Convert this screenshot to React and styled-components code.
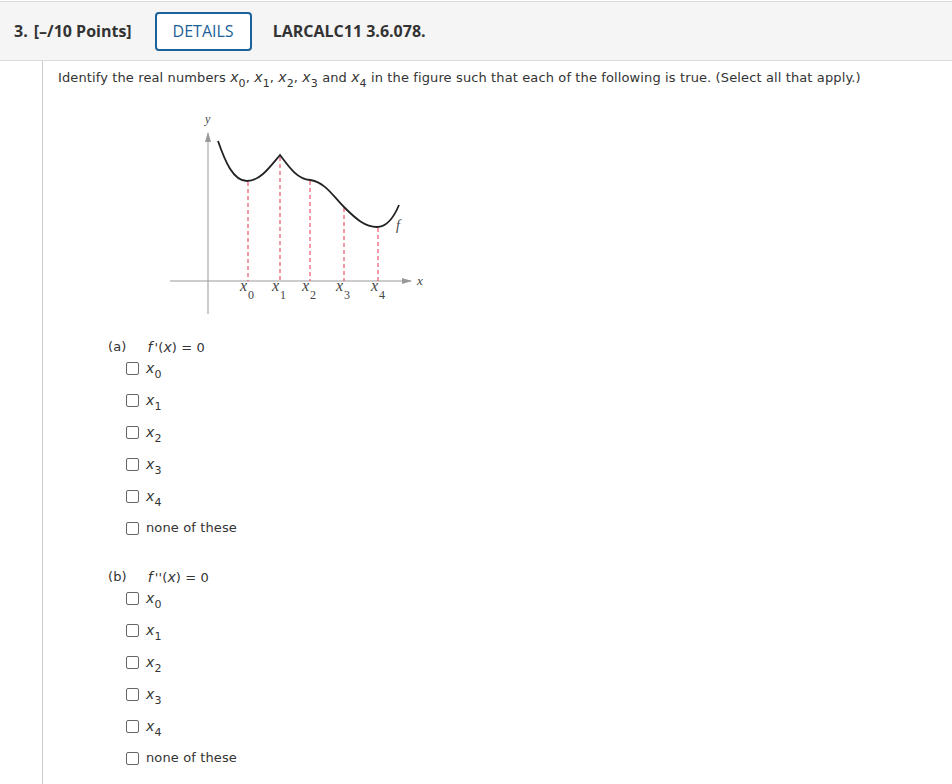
import React from "react";
import styled, { createGlobalStyle } from "styled-components";

const Global = createGlobalStyle`
  html, body { margin: 0; padding: 0; background: #fff; }
  body { font-family: "DejaVu Sans", Verdana, sans-serif; color: #333; }
`;

const Page = styled.div`
  padding-top: 1px;
  min-height: 783px;
  display: flex;
  flex-direction: column;
`;

const Header = styled.div`
  height: 58px;
  background: #f5f5f5;
  border-top: 1px solid #dcdcdc;
  border-bottom: 1px solid #dcdcdc;
  display: flex;
  align-items: center;
  padding-left: 14px;
  font-family: "Open Sans", sans-serif;
  font-weight: 700;
  font-size: 16px;
  color: #333;
`;

const Num = styled.span`
  margin-right: 6px;
`;

const DetailsBtn = styled.div`
  margin-left: 23px;
  box-sizing: border-box;
  width: 97px;
  height: 39px;
  border: 2px solid #1c6197;
  border-radius: 4px;
  background: #fff;
  color: #1c6197;
  font-weight: 400;
  font-size: 16px;
  display: flex;
  align-items: center;
  justify-content: center;
`;

const Code = styled.span`
  margin-left: 21px;
`;

const Body = styled.div`
  flex: 1;
  margin-left: 42px;
  border-left: 1px solid #cccccc;
  padding-left: 15px;
  padding-top: 6px;
  font-size: 13px;
  letter-spacing: 0.12px;
  color: #333;
`;

const Prompt = styled.p`
  margin: 0;
  line-height: 20px;
`;

const Var = styled.i`
  font-style: italic;
  font-size: 14px;
`;

const FVar = styled(Var)`
  padding-right: 2px;
`;

const Sub = styled.sub`
  font-size: 11px;
  font-style: normal;
  vertical-align: -5px;
  line-height: 0;
`;

const Figure = styled.div`
  margin-left: 107px;
  margin-top: 18px;
  width: 265px;
  height: 213px;
`;

const Part = styled.div`
  margin-left: 50px;
  margin-top: ${(p) => p.$top}px;
`;

const PartHead = styled.div`
  display: flex;
  gap: 21px;
  line-height: 20px;
`;

const Options = styled.div`
  margin-left: 18px;
  display: flex;
  flex-direction: column;
  gap: 12px;
`;

const Option = styled.label`
  display: flex;
  align-items: center;
  gap: 7px;
  height: 20px;
  line-height: 20px;
`;

const Box = styled.span`
  box-sizing: border-box;
  width: 13px;
  height: 13px;
  border: 1px solid #666;
  border-radius: 2px;
  background: #fff;
  flex: none;
`;

const Graph = () => (
  <svg width="265" height="213" viewBox="0 0 265 213">
    <defs>
      <marker id="arr" markerWidth="10" markerHeight="6" refX="9" refY="3" orient="auto">
        <path d="M0,0 L10,3 L0,6 Z" fill="#999" />
      </marker>
    </defs>
    <line x1="43" y1="208" x2="43" y2="27" stroke="#999" strokeWidth="1" markerEnd="url(#arr)" />
    <line x1="5" y1="175" x2="246" y2="175" stroke="#999" strokeWidth="1" markerEnd="url(#arr)" />
    <g stroke="#ee5670" strokeWidth="1.2" strokeDasharray="4 3">
      <line x1="83" y1="76" x2="83" y2="175" />
      <line x1="115" y1="51" x2="115" y2="175" />
      <line x1="145" y1="75" x2="145" y2="175" />
      <line x1="179" y1="102" x2="179" y2="175" />
      <line x1="213" y1="122" x2="213" y2="175" />
    </g>
    <path
      d="M53,35 C60,55 68,75 82,75 C95,75 104,62 115,49 C124,61 132,73 145,74 C160,76 168,90 179,101 C191,113 200,121 212,121 C222,121 229,111 234,99"
      fill="none"
      stroke="#222"
      strokeWidth="1.8"
    />
    <g fontFamily="Liberation Serif, serif" fill="#444">
      <text x="40" y="17" fontStyle="italic" fontSize="12">y</text>
      <text x="252" y="179" fontStyle="italic" fontSize="13">x</text>
      <text x="231" y="124" fontStyle="italic" fontSize="14">f</text>
      {[75, 107, 137, 171, 206].map((x, i) => (
        <g key={i}>
          <text x={x} y="185" fontStyle="italic" fontSize="16">x</text>
          <text x={x + 8} y="193" fontSize="12">{i}</text>
        </g>
      ))}
    </g>
  </svg>
);

const X = ({ n }) => (
  <span>
    <Var>x</Var>
    <Sub>{n}</Sub>
  </span>
);

const opts = [0, 1, 2, 3, 4];

const Question = ({ label, expr, top }) => (
  <Part $top={top}>
    <PartHead>
      <span>({label})</span>
      <span>{expr}</span>
    </PartHead>
    <Options>
      {opts.map((n) => (
        <Option key={n}>
          <Box />
          <X n={n} />
        </Option>
      ))}
      <Option>
        <Box />
        <span>none of these</span>
      </Option>
    </Options>
  </Part>
);

export default function App() {
  return (
    <>
      <Global />
      <Page>
        <Header>
          <Num>3.</Num>
          <span>[–/10 Points]</span>
          <DetailsBtn>DETAILS</DetailsBtn>
          <Code>LARCALC11 3.6.078.</Code>
        </Header>
        <Body>
          <Prompt>
            Identify the real numbers <X n={0} />, <X n={1} />, <X n={2} />, <X n={3} /> and <X n={4} /> in
            the figure such that each of the following is true. (Select all that apply.)
          </Prompt>
          <Figure>
            <Graph />
          </Figure>
          <Question
            label="a"
            top={18}
            expr={<><FVar>f</FVar>'(<Var>x</Var>) = 0</>}
          />
          <Question
            label="b"
            top={29}
            expr={<><FVar>f</FVar>''(<Var>x</Var>) = 0</>}
          />
        </Body>
      </Page>
    </>
  );
}
